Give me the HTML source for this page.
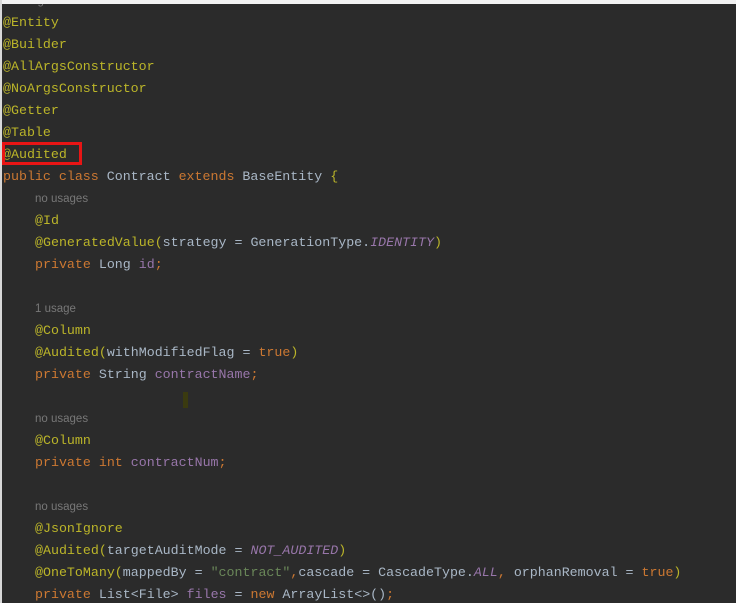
<!DOCTYPE html>
<html><head><style>
html,body{margin:0;width:736px;height:603px;overflow:hidden;background:#2b2b2b}
body{position:relative}
#top{position:absolute;left:0;top:0;width:736px;height:4px;background:#f2f2f2}
#lft{position:absolute;left:0;top:0;width:2px;height:603px;background:#d8d8d8}
#code{position:absolute;left:3px;top:-10px;font-family:"Liberation Mono",monospace;font-size:13.3px;color:#a9b7c6}
.l{height:22px;line-height:22px;white-space:pre}
.h{font-family:"Liberation Sans",sans-serif;font-size:11.5px;color:#787878}
.in{padding-left:32px}
.a{color:#bbb529}.k{color:#cc7832}.f{color:#9876aa}.i{color:#9876aa;font-style:italic}.s{color:#6a8759}
#box{position:absolute;left:2px;top:142px;width:74px;height:17px;border:3px solid #e81515}
#cur{position:absolute;left:183px;top:392px;width:5px;height:16px;background:#3a3a10}
</style></head><body>
<div id="code"><div class="l h">no usages    Ruslan</div><div class="l a">@Entity</div><div class="l a">@Builder</div><div class="l a">@AllArgsConstructor</div><div class="l a">@NoArgsConstructor</div><div class="l a">@Getter</div><div class="l a">@Table</div><div class="l a">@Audited</div><div class="l"><span class="k">public class </span>Contract <span class="k">extends </span>BaseEntity <span class="a">{</span></div><div class="l h in">no usages</div><div class="l in"><span class="a">@Id</span></div><div class="l in"><span class="a">@GeneratedValue(</span>strategy = GenerationType.<span class="i">IDENTITY</span><span class="a">)</span></div><div class="l in"><span class="k">private </span>Long <span class="f">id</span><span class="k">;</span></div><div class="l"> </div><div class="l h in">1 usage</div><div class="l in"><span class="a">@Column</span></div><div class="l in"><span class="a">@Audited(</span>withModifiedFlag = <span class="k">true</span><span class="a">)</span></div><div class="l in"><span class="k">private </span>String <span class="f">contractName</span><span class="k">;</span></div><div class="l"> </div><div class="l h in">no usages</div><div class="l in"><span class="a">@Column</span></div><div class="l in"><span class="k">private int </span><span class="f">contractNum</span><span class="k">;</span></div><div class="l"> </div><div class="l h in">no usages</div><div class="l in"><span class="a">@JsonIgnore</span></div><div class="l in"><span class="a">@Audited(</span>targetAuditMode = <span class="i">NOT_AUDITED</span><span class="a">)</span></div><div class="l in"><span class="a">@OneToMany(</span>mappedBy = <span class="s">"contract"</span><span class="k">,</span>cascade = CascadeType.<span class="i">ALL</span><span class="k">, </span>orphanRemoval = <span class="k">true</span><span class="a">)</span></div><div class="l in"><span class="k">private </span>List&lt;File&gt; <span class="f">files</span> = <span class="k">new </span>ArrayList&lt;&gt;()<span class="k">;</span></div></div>
<div id="top"></div><div id="lft"></div>
<div id="box"></div><div id="cur"></div>
</body></html>
